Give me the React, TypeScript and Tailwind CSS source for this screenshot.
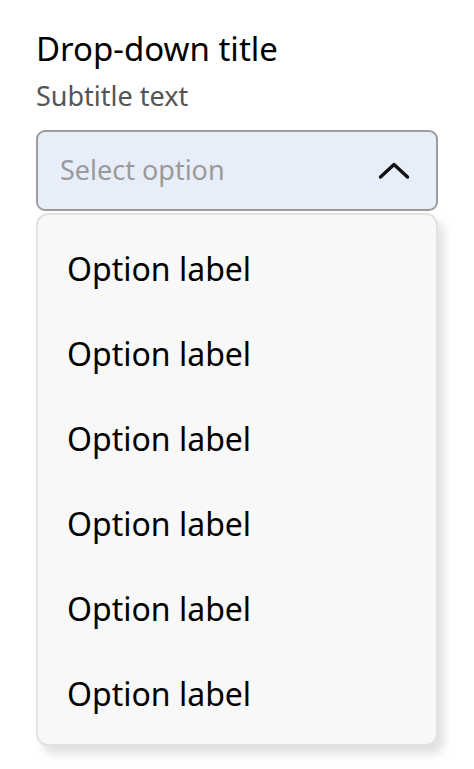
import React from 'react';

function ChevronUp() {
  return (
    <svg width="34" height="20" viewBox="0 0 34 20" fill="none">
      <path d="M3.5 16L17 3.5L30.5 16" stroke="#111" strokeWidth="3.4" strokeLinecap="round" strokeLinejoin="round" />
    </svg>
  );
}

export default function App() {
  const options = Array.from({ length: 6 }, () => 'Option label');

  return (
    <div className="min-h-screen bg-white px-[36px] pt-[27px] font-['Noto_Sans',sans-serif]">
      <h1 className="text-[33px] leading-[44px] text-black">Drop-down title</h1>
      <p className="mt-[7px] text-[27px] leading-[36px] text-[#555]">Subtitle text</p>

      <div className="mt-[16px] flex h-[81px] w-[402px] items-center justify-between rounded-[9px] border-2 border-[#9c9c9c] bg-[#e8eef9] pl-[22px] pr-[25px]">
        <span className="text-[27px] text-[#9a9a9a]">Select option</span>
        <ChevronUp />
      </div>

      <div className="mt-[2px] w-[402px] rounded-[12px] border-2 border-[#e2e2e2] bg-[#f8f8f8] pb-[8px] pt-[11px] shadow-[6px_8px_10px_rgba(0,0,0,0.12)]">
        {options.map((o, i) => (
          <div key={i} className="flex h-[85px] items-center pl-[29px] text-[32px] text-black">
            {o}
          </div>
        ))}
      </div>
    </div>
  );
}
